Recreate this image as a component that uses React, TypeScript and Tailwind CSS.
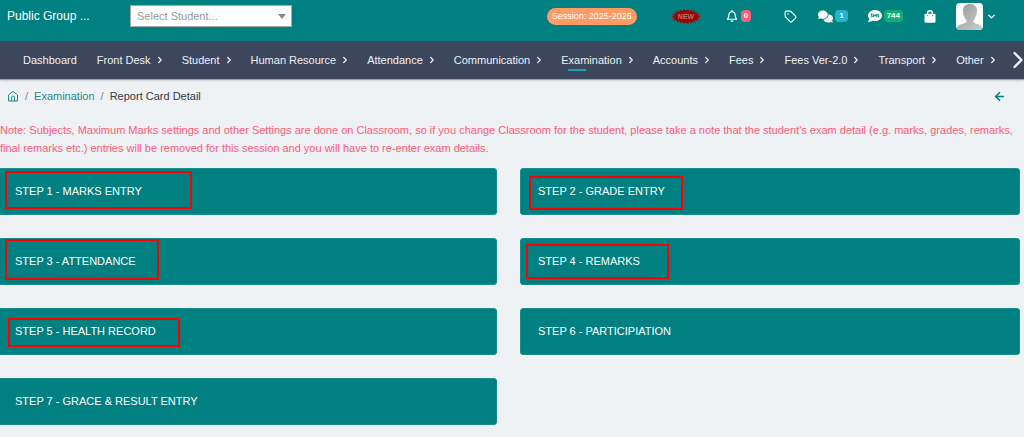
import { FaComments, FaCommentSms, FaRegBell } from "react-icons/fa6";
import { LuArrowLeft, LuChevronDown, LuChevronRight, LuTag } from "react-icons/lu";

type NavItem = {
  label: string;
  hasMenu: boolean;
  active?: boolean;
};

type Step = {
  title: string;
  // position and size of the red frame that lies over the card
  mark?: string;
};

const navItems: NavItem[] = [
  { label: "Dashboard", hasMenu: false },
  { label: "Front Desk", hasMenu: true },
  { label: "Student", hasMenu: true },
  { label: "Human Resource", hasMenu: true },
  { label: "Attendance", hasMenu: true },
  { label: "Communication", hasMenu: true },
  { label: "Examination", hasMenu: true, active: true },
  { label: "Accounts", hasMenu: true },
  { label: "Fees", hasMenu: true },
  { label: "Fees Ver-2.0", hasMenu: true },
  { label: "Transport", hasMenu: true },
  { label: "Other", hasMenu: true },
];

const steps: Step[] = [
  { title: "STEP 1 - MARKS ENTRY", mark: "left-[7px] top-[2px] w-[187px] h-[38px]" },
  { title: "STEP 2 - GRADE ENTRY", mark: "left-[8px] top-[7px] w-[154px] h-[34px]" },
  { title: "STEP 3 - ATTENDANCE", mark: "left-[7px] top-[0px] w-[154px] h-[41px]" },
  { title: "STEP 4 - REMARKS", mark: "left-[5px] top-[5px] w-[143px] h-[35px]" },
  { title: "STEP 5 - HEALTH RECORD", mark: "left-[10px] top-[9px] w-[172px] h-[29px]" },
  { title: "STEP 6 - PARTICIPIATION" },
  { title: "STEP 7 - GRACE & RESULT ENTRY" },
];

// Spiky red badge with the word NEW
function NewBurst() {
  const points = Array.from({ length: 44 }, (_, i) => {
    const angle = (i * Math.PI) / 22;
    const r = i % 2 === 0 ? 1 : 0.76;
    return `${15 + 15 * r * Math.cos(angle)},${7.5 + 7.5 * r * Math.sin(angle)}`;
  }).join(" ");

  return (
    <svg viewBox="0 0 30 15" className="h-[15px] w-[30px]">
      <polygon points={points} fill="#a00000" />
      <text x="15" y="10" textAnchor="middle" fontSize="7" fontWeight="bold" fill="#b9766c" fontFamily="Liberation Sans">
        NEW
      </text>
    </svg>
  );
}

function BagIcon() {
  return (
    <svg viewBox="0 0 12 13" className="h-[13px] w-3">
      <rect x="0.5" y="3.800" width="11" height="9" rx="1.200" fill="currentColor" />
      <path d="M3.600 6V3.200a2.400 2.400 0 0 1 4.800 0V6" fill="none" stroke="currentColor" strokeWidth="1.400" />
      <path d="M3.600 5v1.200M8.400 5v1.200" stroke="#008080" strokeWidth="0.700" />
    </svg>
  );
}

function Avatar() {
  return (
    <svg viewBox="0 0 27 27" className="size-[27px] rounded">
      <defs>
        <linearGradient id="person" x1="0" y1="0" x2="1" y2="1">
          <stop offset="0" stopColor="#989898" />
          <stop offset="1" stopColor="#cccccc" />
        </linearGradient>
      </defs>
      <rect width="27" height="27" fill="#fff" />
      <path
        d="M14 1C9.500 1 7 3.500 7 7.500c0 1 .1 1.800.4 2.600-.7.400-.2 2.300.8 2.800.5 2 1.200 3.200 2.200 4.100v2.200C9 21 2 21 .8 24.500V27h25.400v-2.500C25 21 18.800 21 17.600 19.200V17c1-.9 1.700-2.100 2.200-4.100 1-.5 1.500-2.400.8-2.800.3-.8.4-1.600.4-2.600C21 3.500 18.500 1 14 1z"
        fill="url(#person)"
      />
    </svg>
  );
}

function HomeIcon() {
  return (
    <svg viewBox="0 0 12 12" className="size-3" fill="none" stroke="currentColor" strokeLinejoin="round">
      <path d="M1.500 5 6 1.300 10.500 5v6h-9z" />
      <path d="M4.500 11V7.500a1.500 1.500 0 0 1 3 0V11" />
    </svg>
  );
}

function Header() {
  return (
    <header className="flex h-[41px] items-start bg-[#008080] text-white">
      <a href="#" className="w-[123px] pt-1.5 pl-[7px] text-[12px] leading-5 whitespace-nowrap">
        Public Group ...
      </a>
      <div className="relative mt-[5px] ml-[7px] w-[162px]">
        <select
          aria-label="Select Student"
          className="block h-[22px] w-full appearance-none border border-[#aaa] bg-white pl-1.5 text-[11px] text-[#999]"
        >
          <option>Select Student...</option>
        </select>
        <span className="pointer-events-none absolute top-[9px] right-1.5 border-x-4 border-t-5 border-x-transparent border-t-[#888]" />
      </div>

      <div className="ml-auto flex h-8 items-center">
        <span className="mr-[34px] rounded-full bg-[#ff9b64] px-[5px] text-[9px] leading-[17px]">
          Session: 2025-2026
        </span>
        <a href="#" aria-label="New" className="mr-[25px]">
          <NewBurst />
        </a>
        <button aria-label="Notifications" className="mr-[33px] flex items-center gap-[3px]">
          <FaRegBell size={12} />
          <span className="rounded-sm bg-[#ff5c75] px-[3px] text-[8px] leading-3 font-bold">0</span>
        </button>
        <button aria-label="Tags" className="mr-[21px]">
          <LuTag size={13} />
        </button>
        <button aria-label="Messages" className="mr-[20px] flex items-center gap-[2px]">
          <FaComments size={15} />
          <span className="rounded-sm bg-[#22b5d0] px-1 text-[8px] leading-3 font-bold">1</span>
        </button>
        <button aria-label="SMS" className="mr-[21px] flex items-center gap-[2px]">
          <FaCommentSms size={14} />
          <span className="rounded-sm bg-[#12ad74] px-[3px] text-[8px] leading-3 font-bold">744</span>
        </button>
        <button aria-label="Shop" className="mr-[20px]">
          <BagIcon />
        </button>
        <button aria-label="Profile" className="mr-[27px] flex items-center gap-[3px]">
          <Avatar />
          <LuChevronDown size={11} strokeWidth={3} />
        </button>
      </div>
    </header>
  );
}

function NavBar() {
  return (
    <nav className="flex h-[39px] items-center justify-between border-b border-[#97a3b4] bg-[#3c465c] pl-[23px] text-[#eef1f6] shadow-sm">
      <ul className="flex min-w-0 gap-5 text-[11px] leading-4 whitespace-nowrap">
        {navItems.map((item) => (
          <li key={item.label}>
            <a href="#" className="relative flex items-center gap-1">
              {item.label}
              {item.hasMenu && <LuChevronRight size={10} strokeWidth={3} className="-mr-[3px]" />}
              {item.active && <span className="absolute -bottom-[3px] left-[7px] h-[2px] w-[18px] bg-[#17a2b0]" />}
            </a>
          </li>
        ))}
      </ul>
      <button aria-label="Scroll menu" className="-mr-2 shrink-0">
        <LuChevronRight size={28} strokeWidth={2} />
      </button>
    </nav>
  );
}

export default function App() {
  return (
    <div className="min-h-screen overflow-hidden bg-[#eef2f5] font-['Liberation_Sans',Arial,sans-serif]">
      <Header />
      <NavBar />

      {/* Breadcrumb and back link */}
      <div className="flex items-center justify-between pt-2 pr-[18px] pl-[7px] text-[11px] leading-4">
        <nav aria-label="Breadcrumb" className="flex items-center gap-[6px]">
          <a href="#" aria-label="Home" className="text-[#1f8a8a]">
            <HomeIcon />
          </a>
          <span className="text-[#7c8594]">/</span>
          <a href="#" className="text-[#1f8a8a]">Examination</a>
          <span className="text-[#7c8594]">/</span>
          <span className="text-[#343a46]">Report Card Detail</span>
        </nav>
        <a href="#" aria-label="Back" className="text-[#008080]">
          <LuArrowLeft size={13} strokeWidth={3} />
        </a>
      </div>

      <main className="mr-1 -ml-[3px] pt-[17px] pb-3">
        <p className="mb-[11px] pl-[3px] text-[11px] leading-[18px] text-[#ff5c75]">
          Note: Subjects, Maximum Marks settings and other Settings are done on Classroom, so if you change Classroom
          for the student, please take a note that the student's exam detail (e.g. marks, grades, remarks, final
          remarks etc.) entries will be removed for this session and you will have to re-enter exam details.
        </p>

        {/* One card per step of the report card */}
        <div className="grid grid-cols-2 gap-[23px]">
          {steps.map((step) => (
            <a
              key={step.title}
              href="#"
              className="relative flex h-[47px] items-center rounded-[3px] border border-[#1a8d8d] bg-[#008080] pl-[17px] text-[11px] text-white"
            >
              {step.title}
              {step.mark && <span className={`absolute border-2 border-[#ff0000] ${step.mark}`} />}
            </a>
          ))}
        </div>
      </main>
    </div>
  );
}
